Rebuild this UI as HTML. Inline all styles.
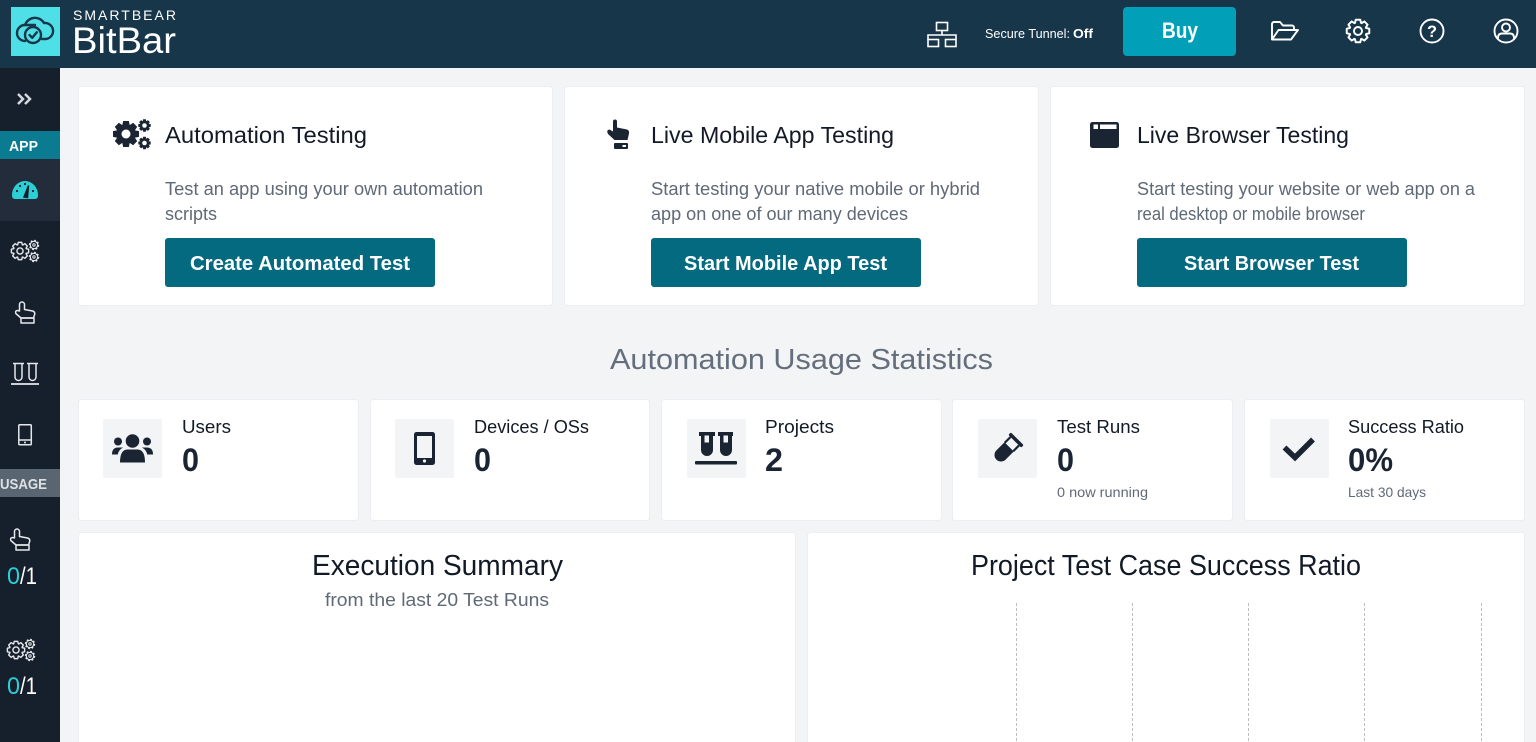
<!DOCTYPE html>
<html lang="en"><head><meta charset="utf-8"><title>BitBar</title>
<style>
html,body{margin:0;padding:0;width:1536px;height:742px;overflow:hidden;background:#f3f4f6}
svg{display:block}
text{font-family:"Liberation Sans",Arial,sans-serif}
.d{fill:#111a26}
.g{fill:#5f6977}
.n{fill:#1a2433;font-weight:700}
</style></head><body>
<svg width="1536" height="742" viewBox="0 0 1536 742" xmlns="http://www.w3.org/2000/svg">
<defs>
<g id="t"><path d="M-2.6-7.1L-2-9.8H2L2.6-7.1L3.2-6.9"/></g>
<g id="gear-o" fill="none" stroke-linejoin="round" stroke-linecap="round">
<use href="#t"/><use href="#t" transform="rotate(45)"/><use href="#t" transform="rotate(90)"/><use href="#t" transform="rotate(135)"/><use href="#t" transform="rotate(180)"/><use href="#t" transform="rotate(225)"/><use href="#t" transform="rotate(270)"/><use href="#t" transform="rotate(315)"/>
<circle r="3.5"/>
</g>
<g id="tf"><path d="M-2.8-7L-2.2-10H2.2L2.8-7Z"/></g>
<g id="gear-s">
<circle r="7.6"/>
<use href="#tf"/><use href="#tf" transform="rotate(45)"/><use href="#tf" transform="rotate(90)"/><use href="#tf" transform="rotate(135)"/><use href="#tf" transform="rotate(180)"/><use href="#tf" transform="rotate(225)"/><use href="#tf" transform="rotate(270)"/><use href="#tf" transform="rotate(315)"/>
</g>
<g id="small-o" fill="none" stroke="#e6e9ec">
<circle r="3.7" stroke-width="1.200"/>
<circle r="4.600" stroke-width="1.300" stroke-dasharray="1.800 1.810"/>
<circle r="1.200" stroke-width="1"/>
</g>
<g id="gears-o" stroke="#e6e9ec">
<use href="#gear-o" transform="translate(20 251) scale(.88)" stroke-width="1.600"/>
<use href="#small-o" transform="translate(34 245)"/>
<use href="#small-o" transform="translate(34 257)"/>
</g>
<g id="hand-o" fill="none" stroke="#e6e9ec" stroke-width="1.500" stroke-linejoin="round">
<path d="M19.500 311V304.500a2.500 2.500 0 0 1 5 0V309.500L32.500 311Q35 311.700 34.800 314L33.500 318H21L15.800 313.500Q14.800 310.800 17.500 310.500Z"/>
<rect x="21" y="318" width="13" height="5"/>
</g>
</defs>

<rect width="1536" height="742" fill="#f3f4f6"/>

<!-- header -->
<rect width="1536" height="68" fill="#17364a"/>
<rect x="11" y="7" width="49" height="49" fill="#4fdfe6"/>
<g fill="none" stroke="#17364a" stroke-width="2.400" stroke-linecap="round" stroke-linejoin="round">
<path d="M25 41A8 8 0 0 1 25 25H35"/>
<path d="M25 25A10.500 10.500 0 0 1 44 23A8 8 0 0 1 46 39H42"/>
<circle cx="33" cy="35" r="8"/>
<path d="M29.500 35l2.800 2.800 4.500-5.500"/>
</g>
<text x="73" y="20" font-size="14" font-weight="400" fill="#fff" textLength="103" lengthAdjust="spacing">SMARTBEAR</text>
<text x="72" y="53" font-size="37" fill="#fff" textLength="104" lengthAdjust="spacingAndGlyphs">BitBar</text>

<g fill="none" stroke="#fff" stroke-width="1.600">
<rect x="936.500" y="22.500" width="11" height="8"/>
<path d="M942 30.500V35M928 39.500V35H956V39.500"/>
<rect x="928" y="39.500" width="10.500" height="7"/>
<rect x="945.500" y="39.500" width="10.500" height="7"/>
</g>
<text x="985" y="38" font-size="13" fill="#fff" textLength="85" lengthAdjust="spacingAndGlyphs">Secure Tunnel:</text>
<text x="1073" y="38" font-size="13" font-weight="700" fill="#fff" textLength="20" lengthAdjust="spacingAndGlyphs">Off</text>
<rect x="1123" y="7" width="113" height="49" rx="4" fill="#02a0b8"/>
<text x="1162" y="38" font-size="22" font-weight="700" fill="#fff" textLength="36" lengthAdjust="spacingAndGlyphs">Buy</text>
<g fill="none" stroke="#fff" stroke-width="1.900" stroke-linejoin="round" stroke-linecap="round">
<path d="M1272 39V24a2 2 0 0 1 2-2h6l3 3.500h9a2 2 0 0 1 2 2V29"/>
<path d="M1272 39.500H1291L1298 30H1278.500Z"/>
<use href="#gear-o" transform="translate(1358 31) scale(1.150)" stroke-width="1.700"/>
<circle cx="1432" cy="31" r="11.500"/>
<circle cx="1506" cy="31" r="11.500"/>
<circle cx="1506" cy="27.500" r="4"/>
<path d="M1498 38q0-4.500 4-4.500h8q4 0 4 4.500"/>
</g>
<text x="1427" y="37" font-size="17" font-weight="700" fill="#fff" textLength="10" lengthAdjust="spacingAndGlyphs">?</text>

<!-- sidebar -->
<rect y="68" width="60" height="674" fill="#161f2c"/>
<path d="M18 94l5 5-5 5M25 94l5 5-5 5" fill="none" stroke="#d5d9de" stroke-width="2.500"/>
<rect y="131" width="60" height="28" fill="#0a7b90"/>
<text x="9" y="151" font-size="15" font-weight="700" fill="#fff" textLength="29" lengthAdjust="spacingAndGlyphs">APP</text>
<rect y="159" width="60" height="62" fill="#222c3b"/>
<path d="M15 199H35Q38 199 38 195A13 14 0 0 0 12 195Q12 199 15 199Z" fill="#2ccfd6"/>
<path d="M24 197L28.500 185.500L27.500 197.500Z" fill="#161f2c" stroke="#161f2c" stroke-width="1.500"/>
<g fill="#161f2c"><circle cx="17" cy="191" r="1.100"/><circle cx="20" cy="186" r="1.100"/><circle cx="25" cy="184" r="1.100"/><circle cx="33" cy="191" r="1.100"/></g>
<use href="#gears-o"/>
<use href="#hand-o"/>
<g fill="none" stroke="#e6e9ec" stroke-width="1.500">
<path d="M13 363.500H24M15 363.500V377a3.500 3.500 0 0 0 7 0V363.500"/>
<path d="M27 363.500H38M29 363.500V377a3.500 3.500 0 0 0 7 0V363.500"/>
<path d="M11 384H39" stroke-width="1.700"/>
<rect x="18.800" y="424.800" width="12.500" height="20" rx="1"/>
<path d="M19 440H31"/>
</g>
<circle cx="25" cy="442.500" r="1" fill="#e6e9ec"/>
<rect y="469" width="60" height="28" fill="#5a6572"/>
<text x="0" y="489" font-size="15" font-weight="700" fill="#dde1e5" textLength="47" lengthAdjust="spacingAndGlyphs">USAGE</text>
<use href="#hand-o" transform="translate(-5 227)"/>
<text x="7" y="584" font-size="24" fill="#2ccfd6" textLength="13" lengthAdjust="spacingAndGlyphs">0</text>
<text x="20" y="584" font-size="24" fill="#fff" textLength="17" lengthAdjust="spacingAndGlyphs">/1</text>
<use href="#gears-o" transform="translate(-4 399)"/>
<text x="7" y="694" font-size="24" fill="#2ccfd6" textLength="13" lengthAdjust="spacingAndGlyphs">0</text>
<text x="20" y="694" font-size="24" fill="#fff" textLength="17" lengthAdjust="spacingAndGlyphs">/1</text>

<!-- cards -->
<g fill="#fff" stroke="#eceef1">
<rect x="78.500" y="86.500" width="474" height="219" rx="3"/>
<rect x="564.500" y="86.500" width="474" height="219" rx="3"/>
<rect x="1050.500" y="86.500" width="474" height="219" rx="3"/>
<rect x="78.500" y="399.500" width="280" height="121" rx="3"/>
<rect x="370.500" y="399.500" width="279" height="121" rx="3"/>
<rect x="661.500" y="399.500" width="280" height="121" rx="3"/>
<rect x="952.500" y="399.500" width="280" height="121" rx="3"/>
<rect x="1244.500" y="399.500" width="280" height="121" rx="3"/>
<rect x="78.500" y="532.500" width="717" height="220" rx="3"/>
<rect x="807.500" y="532.500" width="717" height="220" rx="3"/>
</g>

<g fill="#1a2433">
<use href="#gear-s" transform="translate(126 134) scale(1.300)"/>
<use href="#gear-s" transform="translate(144.500 125.500) scale(.62)"/>
<use href="#gear-s" transform="translate(144.500 143) scale(.62)"/>
</g>
<g fill="#fff"><circle cx="126" cy="134" r="4.500"/><circle cx="144.500" cy="125.500" r="2.300"/><circle cx="144.500" cy="143" r="2.300"/></g>
<text class="d" x="165" y="143" font-size="23" textLength="202" lengthAdjust="spacingAndGlyphs">Automation Testing</text>
<text class="g" x="165" y="195" font-size="18" textLength="318" lengthAdjust="spacingAndGlyphs">Test an app using your own automation</text>
<text class="g" x="165" y="220" font-size="18" textLength="52" lengthAdjust="spacingAndGlyphs">scripts</text>
<rect x="165" y="238" width="270" height="49" rx="3" fill="#046a80"/>
<text x="190" y="270" font-size="20" font-weight="700" fill="#fff" textLength="220" lengthAdjust="spacingAndGlyphs">Create Automated Test</text>

<path d="M613 121.500a2 2 0 0 1 4 0V127.500L627 129.500Q629.500 130.500 629 133.500L627.500 140H614.500L608 134Q606 130 609.500 129.500L613 131.500Z" fill="#1a2433"/>
<rect x="614" y="143" width="14" height="6" rx="1" fill="#1a2433"/>
<rect x="622.500" y="145" width="3.500" height="2" fill="#fff"/>
<text class="d" x="651" y="143" font-size="23" textLength="243" lengthAdjust="spacingAndGlyphs">Live Mobile App Testing</text>
<text class="g" x="651" y="195" font-size="18" textLength="329" lengthAdjust="spacingAndGlyphs">Start testing your native mobile or hybrid</text>
<text class="g" x="651" y="220" font-size="18" textLength="257" lengthAdjust="spacingAndGlyphs">app on one of our many devices</text>
<rect x="651" y="238" width="270" height="49" rx="3" fill="#046a80"/>
<text x="684" y="270" font-size="20" font-weight="700" fill="#fff" textLength="203" lengthAdjust="spacingAndGlyphs">Start Mobile App Test</text>

<rect x="1090" y="122" width="29" height="26" rx="2.500" fill="#1a2433"/>
<rect x="1093.500" y="124.500" width="4.500" height="4.500" fill="#fff"/>
<rect x="1100" y="124.500" width="16.500" height="4.500" fill="#fff"/>
<text class="d" x="1137" y="143" font-size="23" textLength="212" lengthAdjust="spacingAndGlyphs">Live Browser Testing</text>
<text class="g" x="1137" y="195" font-size="18" textLength="338" lengthAdjust="spacingAndGlyphs">Start testing your website or web app on a</text>
<text class="g" x="1137" y="220" font-size="18" textLength="228" lengthAdjust="spacingAndGlyphs">real desktop or mobile browser</text>
<rect x="1137" y="238" width="270" height="49" rx="3" fill="#046a80"/>
<text x="1184" y="270" font-size="20" font-weight="700" fill="#fff" textLength="175" lengthAdjust="spacingAndGlyphs">Start Browser Test</text>

<text x="610" y="369" font-size="29" fill="#646e7c" textLength="383" lengthAdjust="spacingAndGlyphs">Automation Usage Statistics</text>

<!-- stats -->
<g fill="#f3f4f6">
<rect x="103" y="419" width="59" height="59" rx="2"/>
<rect x="395" y="419" width="59" height="59" rx="2"/>
<rect x="687" y="419" width="59" height="59" rx="2"/>
<rect x="978" y="419" width="59" height="59" rx="2"/>
<rect x="1270" y="419" width="59" height="59" rx="2"/>
</g>
<g fill="#1a2433">
<circle cx="132.500" cy="441" r="6.800"/><circle cx="118" cy="441.500" r="4"/><circle cx="147" cy="441.500" r="4"/>
<path d="M120 462.500Q120 450 127 449.500H138Q145 450 145 462.500Z"/>
<path d="M112 454.500Q112 447.500 118 447.500H123Q118.500 450 117.800 454.500Z"/>
<path d="M153 454.500Q153 447.500 147 447.500H142Q146.500 450 147.200 454.500Z"/>
</g>
<text class="d" x="182" y="433" font-size="18.500" textLength="49" lengthAdjust="spacingAndGlyphs">Users</text>
<text class="n" x="182" y="471" font-size="32" textLength="17" lengthAdjust="spacingAndGlyphs">0</text>

<rect x="414" y="432" width="21" height="33" rx="2.500" fill="#1a2433"/>
<rect x="417" y="436" width="15" height="22" fill="#f3f4f6"/>
<circle cx="424.500" cy="461" r="1.600" fill="#f3f4f6"/>
<text class="d" x="474" y="433" font-size="18.500" textLength="115" lengthAdjust="spacingAndGlyphs">Devices / OSs</text>
<text class="n" x="474" y="471" font-size="32" textLength="17" lengthAdjust="spacingAndGlyphs">0</text>

<g fill="#1a2433">
<path d="M699 432H715V436H713V450a6 6 0 0 1-12 0V436H699Z"/>
<path d="M718 432H733V436H732V450a6 6 0 0 1-12 0V436H718Z"/>
<rect x="695" y="461" width="42" height="3.500" rx="1"/>
</g>
<rect x="704.500" y="435.500" width="4.500" height="7" fill="#f3f4f6"/>
<rect x="723.500" y="435.500" width="4.500" height="7" fill="#f3f4f6"/>
<text class="d" x="765" y="433" font-size="18.500" textLength="69" lengthAdjust="spacingAndGlyphs">Projects</text>
<text class="n" x="765" y="471" font-size="32" textLength="18" lengthAdjust="spacingAndGlyphs">2</text>

<g transform="rotate(45 1007 449)">
<path d="M1001 438V457.500a6 6 0 0 0 12 0V438" fill="none" stroke="#1a2433" stroke-width="1"/>
<path d="M1001 446H1013V457.500a6 6 0 0 1-12 0Z" fill="#1a2433"/>
<path d="M1001 438V446M1013 438V446" stroke="#1a2433" stroke-width="2.200"/>
<rect x="998" y="434.500" width="18" height="3.500" rx="1" fill="#1a2433"/>
</g>
<text class="d" x="1057" y="433" font-size="18.500" textLength="83" lengthAdjust="spacingAndGlyphs">Test Runs</text>
<text class="n" x="1057" y="471" font-size="32" textLength="17" lengthAdjust="spacingAndGlyphs">0</text>
<text class="g" x="1057" y="497" font-size="14" textLength="91" lengthAdjust="spacingAndGlyphs">0 now running</text>

<path d="M1284.500 447.500L1295 457.500L1313 439.500" fill="none" stroke="#1a2433" stroke-width="5.500"/>
<text class="d" x="1348" y="433" font-size="18.500" textLength="116" lengthAdjust="spacingAndGlyphs">Success Ratio</text>
<text class="n" x="1348" y="471" font-size="32" textLength="45" lengthAdjust="spacingAndGlyphs">0%</text>
<text class="g" x="1348" y="497" font-size="14" textLength="78" lengthAdjust="spacingAndGlyphs">Last 30 days</text>

<!-- charts -->
<text class="d" x="312" y="575" font-size="29" textLength="251" lengthAdjust="spacingAndGlyphs">Execution Summary</text>
<text class="g" x="325" y="606" font-size="18" textLength="224" lengthAdjust="spacingAndGlyphs">from the last 20 Test Runs</text>
<text class="d" x="971" y="575" font-size="29" textLength="390" lengthAdjust="spacingAndGlyphs">Project Test Case Success Ratio</text>
<g stroke="#bdbdbd" stroke-width="1" stroke-dasharray="3 2">
<path d="M1016.500 603V742M1132.500 603V742M1248.500 603V742M1364.500 603V742M1481.500 603V742"/>
</g>
</svg>
</body></html>
